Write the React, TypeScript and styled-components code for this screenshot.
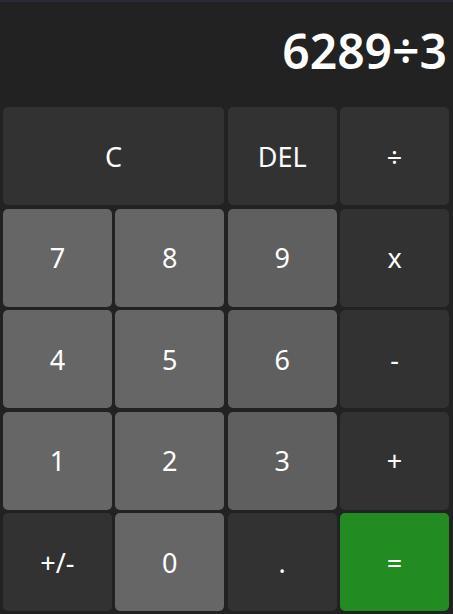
import React from 'react';
import styled, { createGlobalStyle } from 'styled-components';

const GlobalStyle = createGlobalStyle`
  html, body {
    margin: 0;
    padding: 0;
    background: #222222;
  }

  body {
    font-family: 'Noto Sans', 'Open Sans', sans-serif;
  }
`;

type Tone = 'dark' | 'light' | 'mid' | 'green';

const tones: Record<Tone, string> = {
  dark: '#323232',
  light: '#666666',
  mid: '#5f5f5f',
  green: '#228b22',
};

export const Frame = styled.div`
  height: 614px;
  display: flex;
  flex-direction: column;
  background: #222222;
  border-top: 2px solid #2b2a38;
  box-sizing: border-box;
`;

export const Display = styled.div`
  height: 103px;
  display: flex;
  align-items: center;
  justify-content: flex-end;
  padding: 0 6px 6px 0;
  box-sizing: border-box;
  color: #ffffff;
  font-size: 48px;
  font-weight: 600;
`;

export const Keypad = styled.div`
  flex: 1;
  display: grid;
  grid-template-columns: repeat(4, 1fr);
  grid-template-rows: repeat(5, 1fr);
  gap: 3.5px;
  padding: 2px 4px 3px 3px;
`;

export const Key = styled.button<{ $tone: Tone; $span?: number }>`
  grid-column: span ${({ $span }) => $span || 1};
  border: none;
  border-radius: 5px;
  background: ${({ $tone }) => tones[$tone]};
  color: #ffffff;
  font-family: inherit;
  font-size: 27px;
  display: flex;
  align-items: center;
  justify-content: center;
  cursor: pointer;
`;

const keys: { label: string; tone: Tone; span?: number }[] = [
  { label: 'C', tone: 'dark', span: 2 },
  { label: 'DEL', tone: 'dark' },
  { label: '÷', tone: 'dark' },
  { label: '7', tone: 'light' },
  { label: '8', tone: 'light' },
  { label: '9', tone: 'mid' },
  { label: 'x', tone: 'dark' },
  { label: '4', tone: 'light' },
  { label: '5', tone: 'light' },
  { label: '6', tone: 'mid' },
  { label: '-', tone: 'dark' },
  { label: '1', tone: 'light' },
  { label: '2', tone: 'light' },
  { label: '3', tone: 'mid' },
  { label: '+', tone: 'dark' },
  { label: '+/-', tone: 'dark' },
  { label: '0', tone: 'light' },
  { label: '.', tone: 'dark' },
  { label: '=', tone: 'green' },
];

export default function App() {
  return (
    <>
      <GlobalStyle />
      <Frame>
        <Display>6289÷3</Display>
        <Keypad>
          {keys.map((k) => (
            <Key key={k.label} $tone={k.tone} $span={k.span}>
              {k.label}
            </Key>
          ))}
        </Keypad>
      </Frame>
    </>
  );
}
